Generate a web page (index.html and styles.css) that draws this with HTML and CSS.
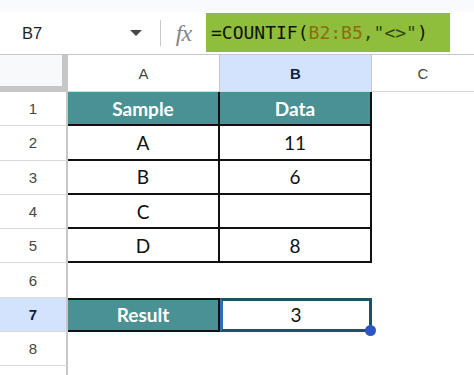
FILE: index.html
```html
<!DOCTYPE html>
<html lang="en">
<head>
    <meta charset="UTF-8">
    <link rel="stylesheet" href="styles.css">
    <title>COUNTIF</title>
</head>
<body>
    <div class="top-strip"></div>
    <div class="formula-bar">
        <div class="name-box">
            <span class="cell-ref">B7</span>
            <span class="arrow"></span>
        </div>
        <div class="divider"></div>
        <div class="fx">fx</div>
        <div class="formula">=COUNTIF(<span class="range">B2:B5</span><span class="str">,"&lt;&gt;"</span>)</div>
    </div>
    <div class="sheet">
        <div class="row head-row">
            <div class="corner"></div>
            <div class="col-head">A</div>
            <div class="col-head active">B</div>
            <div class="col-head last">C</div>
        </div>
        <div class="row">
            <div class="num">1</div>
            <div class="cell title first">Sample</div>
            <div class="cell title">Data</div>
            <div class="blank"></div>
        </div>
        <div class="row">
            <div class="num">2</div>
            <div class="cell first">A</div>
            <div class="cell">11</div>
            <div class="blank"></div>
        </div>
        <div class="row">
            <div class="num">3</div>
            <div class="cell first">B</div>
            <div class="cell">6</div>
            <div class="blank"></div>
        </div>
        <div class="row">
            <div class="num">4</div>
            <div class="cell first">C</div>
            <div class="cell"></div>
            <div class="blank"></div>
        </div>
        <div class="row">
            <div class="num">5</div>
            <div class="cell first">D</div>
            <div class="cell">8</div>
            <div class="blank"></div>
        </div>
        <div class="row">
            <div class="num">6</div>
            <div class="blank"></div>
            <div class="blank"></div>
            <div class="blank"></div>
        </div>
        <div class="row">
            <div class="num active">7</div>
            <div class="cell title first result">Result</div>
            <div class="cell selected">3<span class="handle"></span></div>
            <div class="blank"></div>
        </div>
        <div class="row">
            <div class="num">8</div>
            <div class="blank"></div>
            <div class="blank"></div>
            <div class="blank"></div>
        </div>
        <div class="row">
            <div class="num">9</div>
            <div class="blank"></div>
            <div class="blank"></div>
            <div class="blank"></div>
        </div>
    </div>
</body>
</html>
```

FILE: styles.css
```css
body {
    margin: 0;
    width: 474px;
    height: 375px;
    overflow: hidden;
    background-color: #ffffff;
    font-family: "Liberation Sans", Arial, sans-serif;
}

.top-strip {
    height: 12px;
    background-color: #f8fafd;
}

.formula-bar {
    display: flex;
    align-items: center;
    height: 43px;
    border-bottom: 1px solid #c7c7c7;
    box-sizing: border-box;
}

.name-box {
    display: flex;
    align-items: center;
    width: 160px;
    padding-left: 22px;
    box-sizing: border-box;
}

.cell-ref {
    font-size: 16.5px;
    color: #1f1f1f;
    flex: 1;
}

.arrow {
    width: 0;
    height: 0;
    border-left: 6px solid transparent;
    border-right: 6px solid transparent;
    border-top: 6px solid #444746;
    margin-right: 18px;
}

.divider {
    width: 1px;
    height: 26px;
    background-color: #c7c7c7;
}

.fx {
    width: 45px;
    text-align: center;
    font-family: "Liberation Serif", serif;
    font-style: italic;
    font-size: 24px;
    color: #80868b;
    letter-spacing: -1px;
}

.formula {
    align-self: flex-start;
    margin-top: 1px;
    width: 244px;
    height: 39px;
    line-height: 39px;
    padding-left: 5px;
    box-sizing: border-box;
    background-color: #8fbd3c;
    font-family: "DejaVu Sans Mono", monospace;
    font-size: 18px;
    color: #111111;
    white-space: nowrap;
}

.range {
    color: #8c6d10;
}

.str {
    color: #2c4a12;
}

.sheet {
    display: flex;
    flex-direction: column;
}

.row {
    display: grid;
    grid-template-columns: 68px 152px 152px 102px;
    height: 34.3px;
}

.head-row {
    height: 37px;
}

.corner {
    background-color: #f8f9fa;
    border-right: 6px solid #c4c7c5;
    border-bottom: 6px solid #c4c7c5;
}

.col-head {
    display: flex;
    align-items: center;
    justify-content: center;
    font-size: 15px;
    color: #444746;
    border-bottom: 1px solid #d7d7d7;
    border-right: 1px solid #c7c7c7;
}

.col-head.active {
    background-color: #d3e3fd;
    font-weight: bold;
    color: #0b1f3f;
}

.col-head.last {
    border-right: none;
}

.num {
    display: flex;
    align-items: center;
    justify-content: center;
    font-size: 15px;
    color: #444746;
    border-right: 2px solid #c7c7c7;
    border-bottom: 1px solid #dadada;
}

.num.active {
    background-color: #d3e3fd;
    font-weight: bold;
    color: #0b1f3f;
}

.cell {
    display: flex;
    align-items: center;
    justify-content: center;
    font-family: Lato, "Open Sans", sans-serif;
    font-size: 19px;
    color: #111111;
    border-right: 2px solid #111111;
    border-bottom: 2px solid #111111;
    position: relative;
}

.cell.first {
    border-left: none;
}

.title {
    background-color: #4a9194;
    color: #ffffff;
    font-weight: bold;
}

.result {
    border-top: 2px solid #111111;
}

.selected {
    border: 3px solid #1d5266;
    border-left-color: #2a6fb0;
}

.handle {
    position: absolute;
    right: -7px;
    bottom: -7px;
    width: 11px;
    height: 11px;
    border-radius: 50%;
    background-color: #2c55c4;
}
```
